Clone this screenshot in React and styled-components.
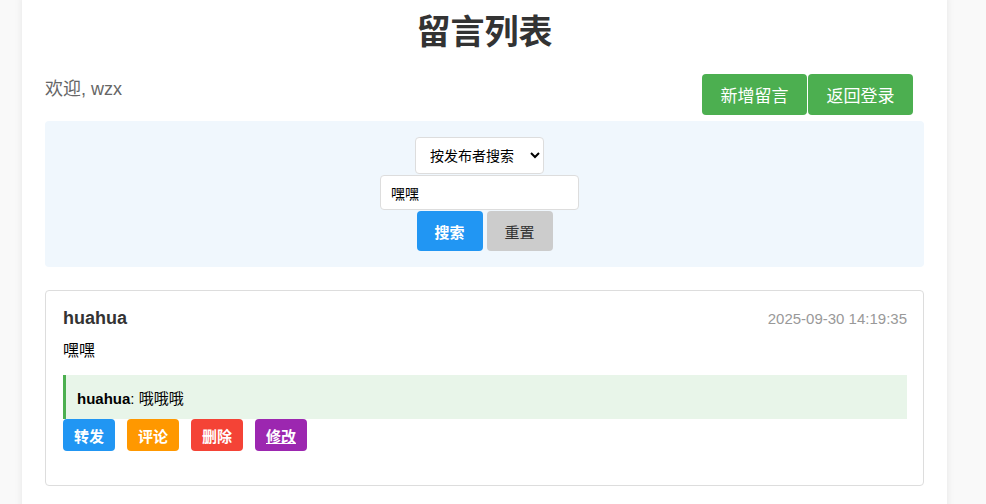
import React from 'react'
import styled, { createGlobalStyle } from 'styled-components'

const GlobalStyle = createGlobalStyle`
  html, body {
    margin: 0;
    padding: 0;
    background: #f9f9f9;
    font-family: "Liberation Sans", Arial, "Noto Sans CJK SC", sans-serif;
  }
  body {
    padding-right: 17px;
  }
`
const Container = styled.div`
  width: 925px;
  box-sizing: border-box;
  margin: -6px auto 0;
  padding: 0 23px 20px;
  background: #ffffff;
  box-shadow: 0 0 8px rgba(0, 0, 0, 0.08);
  min-height: 530px;
`
const Title = styled.h1`
  margin: 0;
  padding-top: 13px;
  height: 67px;
  font-size: 34px;
  font-weight: bold;
  color: #333333;
  text-align: center;
  line-height: 50px;
`
const HeaderRow = styled.div`
  display: flex;
  justify-content: space-between;
  align-items: flex-start;
  margin-bottom: 6px;
`
const Welcome = styled.span`
  font-size: 18px;
  color: #666666;
  line-height: 24px;
  padding-top: 3px;
`
const ButtonGroup = styled.div`
  display: flex;
  gap: 1px;
  margin-right: 11px;
  padding-top: 0;
`
const GreenButton = styled.button`
  width: 105px;
  height: 41px;
  border: none;
  border-radius: 4px;
  background: #4caf50;
  color: #ffffff;
  font-size: 17px;
  font-family: inherit;
  cursor: pointer;
`
const SearchBox = styled.div`
  background: #f0f7fd;
  border-radius: 4px;
  padding: 16px 0 16px;
  display: flex;
  flex-direction: column;
  align-items: center;
  margin-bottom: 23px;
`
const Select = styled.select`
  width: 129px;
  height: 37px;
  border: 1px solid #dddddd;
  border-radius: 4px;
  background: #ffffff;
  font-size: 14px;
  font-family: inherit;
  padding: 0 6px 0 10px;
  color: #000;
  margin: 0 10px 1px 0;
`
const Input = styled.input`
  width: 199px;
  height: 35px;
  box-sizing: border-box;
  border: 1px solid #dddddd;
  border-radius: 4px;
  font-size: 14px;
  font-family: inherit;
  padding: 0 10px;
  color: #000;
  margin: 0 10px 1px 0;
`
const SearchActions = styled.div`
  display: flex;
  gap: 4px;
`
const SearchButton = styled.button`
  width: 66px;
  height: 40px;
  border: none;
  border-radius: 4px;
  background: ${p => (p.primary ? '#2196f3' : '#cccccc')};
  color: ${p => (p.primary ? '#ffffff' : '#333333')};
  font-weight: ${p => (p.primary ? 'bold' : 'normal')};
  font-size: 15px;
  font-family: inherit;
  cursor: pointer;
`
const Card = styled.div`
  border: 1px solid #dddddd;
  border-radius: 4px;
  padding: 15px 16px 34px 17px;
`
const CardHeader = styled.div`
  display: flex;
  justify-content: space-between;
  align-items: center;
  height: 24px;
`
const Author = styled.span`
  font-size: 18px;
  font-weight: bold;
  color: #333333;
`
const Time = styled.span`
  font-size: 15px;
  color: #999999;
`
const Content = styled.p`
  margin: 11px 0 14px;
  font-size: 16px;
  line-height: 20px;
  color: #000;
`
const Comment = styled.div`
  background: #e8f5e9;
  border-left: 3px solid #4caf50;
  padding: 0 11px;
  height: 44px;
  display: flex;
  align-items: center;
  font-size: 15px;
  color: #000;
  b {
    font-weight: bold;
  }
`
const Actions = styled.div`
  display: flex;
  gap: 12px;
`
const ActionButton = styled.button`
  width: 52px;
  height: 32px;
  border: none;
  border-radius: 4px;
  background: ${p => p.color};
  color: #ffffff;
  font-size: 15px;
  font-weight: bold;
  font-family: inherit;
  text-decoration: ${p => (p.link ? 'underline' : 'none')};
  cursor: pointer;
  padding: 0;
`

export default function App() {
  return (
    <>
      <GlobalStyle />
      <Container>
        <Title>留言列表</Title>
        <HeaderRow>
          <Welcome>欢迎, wzx</Welcome>
          <ButtonGroup>
            <GreenButton>新增留言</GreenButton>
            <GreenButton>返回登录</GreenButton>
          </ButtonGroup>
        </HeaderRow>
        <SearchBox>
          <Select defaultValue="author">
            <option value="author">按发布者搜索</option>
            <option value="content">按内容搜索</option>
          </Select>
          <Input defaultValue="嘿嘿" />
          <SearchActions>
            <SearchButton primary>搜索</SearchButton>
            <SearchButton>重置</SearchButton>
          </SearchActions>
        </SearchBox>
        <Card>
          <CardHeader>
            <Author>huahua</Author>
            <Time>2025-09-30 14:19:35</Time>
          </CardHeader>
          <Content>嘿嘿</Content>
          <Comment>
            <span>
              <b>huahua</b>: 哦哦哦
            </span>
          </Comment>
          <Actions>
            <ActionButton color="#2196f3">转发</ActionButton>
            <ActionButton color="#ff9800">评论</ActionButton>
            <ActionButton color="#f44336">删除</ActionButton>
            <ActionButton color="#9c27b0" link>修改</ActionButton>
          </Actions>
        </Card>
      </Container>
    </>
  )
}
